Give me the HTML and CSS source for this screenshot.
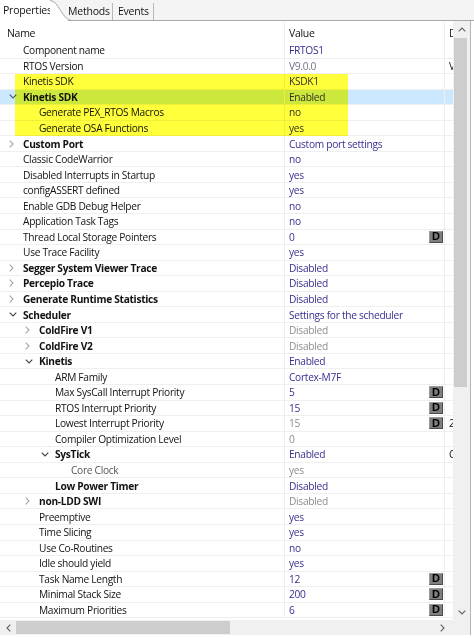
FILE: index.html
```html
<!DOCTYPE html>
<html>
<head>
<meta charset="utf-8">
<link rel="stylesheet" href="styles.css">
</head>
<body>
<div class="tabs">
  <div class="tab active">Properties</div>
  <svg class="tab-curve" width="22" height="21" viewBox="0 0 22 21"><path d="M0 0 C9 0 12 20.5 22 20.5 L22 21 L0 21 Z" fill="#ffffff"/><path d="M0 0.5 C9 0.5 12 20.5 22 20.5" fill="none" stroke="#a8a8a8" stroke-width="1"/></svg>
  <div class="tab methods"><span>Methods</span></div>
  <div class="tab events"><span>Events</span></div>
  <div class="tab-fill"></div>
</div>
<div class="main">
  <div class="table">
    <div class="row head"><div class="name"><span class="hname">Name</span></div><div class="value">Value</div><div class="dcol">D</div></div>

    <div class="row l0"><div class="name"><span class="tw"></span><span>Component name</span></div><div class="value v">FRTOS1</div><div class="dcol"></div></div>
    <div class="row l0"><div class="name"><span class="tw"></span><span>RTOS Version</span></div><div class="value ro">V9.0.0</div><div class="dcol">V</div></div>
    <div class="row l0"><div class="name"><span class="tw"></span><span>Kinetis SDK</span></div><div class="value v">KSDK1</div><div class="dcol"></div></div>
    <div class="row l0 b sel"><div class="name"><span class="tw"><svg class="ex" width="8" height="5" viewBox="0 0 8 5"><path d="M0.7 0.7 L4 4 L7.3 0.7" fill="none" stroke="#4a5a6a" stroke-width="1.1"/></svg></span><span>Kinetis SDK</span></div><div class="value v">Enabled</div><div class="dcol"></div></div>
    <div class="row l1"><div class="name"><span class="tw"></span><span>Generate PEX_RTOS Macros</span></div><div class="value v">no</div><div class="dcol"></div></div>
    <div class="row l1"><div class="name"><span class="tw"></span><span>Generate OSA Functions</span></div><div class="value v">yes</div><div class="dcol"></div></div>
    <div class="row l0 b"><div class="name"><span class="tw"><svg class="co" width="5" height="8" viewBox="0 0 5 8"><path d="M0.7 0.7 L4 4 L0.7 7.3" fill="none" stroke="#a6a6a6" stroke-width="1.1"/></svg></span><span>Custom Port</span></div><div class="value v">Custom port settings</div><div class="dcol"></div></div>
    <div class="row l0"><div class="name"><span class="tw"></span><span>Classic CodeWarrior</span></div><div class="value v">no</div><div class="dcol"></div></div>
    <div class="row l0"><div class="name"><span class="tw"></span><span>Disabled Interrupts in Startup</span></div><div class="value v">yes</div><div class="dcol"></div></div>
    <div class="row l0"><div class="name"><span class="tw"></span><span>configASSERT defined</span></div><div class="value v">yes</div><div class="dcol"></div></div>
    <div class="row l0"><div class="name"><span class="tw"></span><span>Enable GDB Debug Helper</span></div><div class="value v">no</div><div class="dcol"></div></div>
    <div class="row l0"><div class="name"><span class="tw"></span><span>Application Task Tags</span></div><div class="value v">no</div><div class="dcol"></div></div>
    <div class="row l0"><div class="name"><span class="tw"></span><span>Thread Local Storage Pointers</span></div><div class="value v"><span>0</span><span class="dbtn">D</span></div><div class="dcol"></div></div>
    <div class="row l0"><div class="name"><span class="tw"></span><span>Use Trace Facility</span></div><div class="value v">yes</div><div class="dcol"></div></div>
    <div class="row l0 b"><div class="name"><span class="tw"><svg class="co" width="5" height="8" viewBox="0 0 5 8"><path d="M0.7 0.7 L4 4 L0.7 7.3" fill="none" stroke="#a6a6a6" stroke-width="1.1"/></svg></span><span>Segger System Viewer Trace</span></div><div class="value v">Disabled</div><div class="dcol"></div></div>
    <div class="row l0 b"><div class="name"><span class="tw"><svg class="co" width="5" height="8" viewBox="0 0 5 8"><path d="M0.7 0.7 L4 4 L0.7 7.3" fill="none" stroke="#a6a6a6" stroke-width="1.1"/></svg></span><span>Percepio Trace</span></div><div class="value v">Disabled</div><div class="dcol"></div></div>
    <div class="row l0 b"><div class="name"><span class="tw"><svg class="co" width="5" height="8" viewBox="0 0 5 8"><path d="M0.7 0.7 L4 4 L0.7 7.3" fill="none" stroke="#a6a6a6" stroke-width="1.1"/></svg></span><span>Generate Runtime Statistics</span></div><div class="value v">Disabled</div><div class="dcol"></div></div>
    <div class="row l0 b"><div class="name"><span class="tw"><svg class="ex" width="8" height="5" viewBox="0 0 8 5"><path d="M0.7 0.7 L4 4 L7.3 0.7" fill="none" stroke="#404040" stroke-width="1.1"/></svg></span><span>Scheduler</span></div><div class="value v">Settings for the scheduler</div><div class="dcol"></div></div>
    <div class="row l1 b"><div class="name"><span class="tw"><svg class="co" width="5" height="8" viewBox="0 0 5 8"><path d="M0.7 0.7 L4 4 L0.7 7.3" fill="none" stroke="#a6a6a6" stroke-width="1.1"/></svg></span><span>ColdFire V1</span></div><div class="value g">Disabled</div><div class="dcol"></div></div>
    <div class="row l1 b"><div class="name"><span class="tw"><svg class="co" width="5" height="8" viewBox="0 0 5 8"><path d="M0.7 0.7 L4 4 L0.7 7.3" fill="none" stroke="#a6a6a6" stroke-width="1.1"/></svg></span><span>ColdFire V2</span></div><div class="value g">Disabled</div><div class="dcol"></div></div>
    <div class="row l1 b"><div class="name"><span class="tw"><svg class="ex" width="8" height="5" viewBox="0 0 8 5"><path d="M0.7 0.7 L4 4 L7.3 0.7" fill="none" stroke="#404040" stroke-width="1.1"/></svg></span><span>Kinetis</span></div><div class="value v">Enabled</div><div class="dcol"></div></div>
    <div class="row l2"><div class="name"><span class="tw"></span><span>ARM Family</span></div><div class="value v">Cortex-M7F</div><div class="dcol"></div></div>
    <div class="row l2"><div class="name"><span class="tw"></span><span>Max SysCall Interrupt Priority</span></div><div class="value v"><span>5</span><span class="dbtn">D</span></div><div class="dcol"></div></div>
    <div class="row l2"><div class="name"><span class="tw"></span><span>RTOS Interrupt Priority</span></div><div class="value v"><span>15</span><span class="dbtn">D</span></div><div class="dcol"></div></div>
    <div class="row l2"><div class="name"><span class="tw"></span><span>Lowest Interrupt Priority</span></div><div class="value g"><span>15</span><span class="dbtn">D</span></div><div class="dcol">2</div></div>
    <div class="row l2"><div class="name"><span class="tw"></span><span>Compiler Optimization Level</span></div><div class="value g">0</div><div class="dcol"></div></div>
    <div class="row l2 b"><div class="name"><span class="tw"><svg class="ex" width="8" height="5" viewBox="0 0 8 5"><path d="M0.7 0.7 L4 4 L7.3 0.7" fill="none" stroke="#404040" stroke-width="1.1"/></svg></span><span>SysTick</span></div><div class="value v">Enabled</div><div class="dcol">C</div></div>
    <div class="row l3"><div class="name"><span class="tw"></span><span class="gn">Core Clock</span></div><div class="value g">yes</div><div class="dcol"></div></div>
    <div class="row l2 b"><div class="name"><span class="tw"></span><span>Low Power Timer</span></div><div class="value v">Disabled</div><div class="dcol"></div></div>
    <div class="row l1 b"><div class="name"><span class="tw"><svg class="co" width="5" height="8" viewBox="0 0 5 8"><path d="M0.7 0.7 L4 4 L0.7 7.3" fill="none" stroke="#a6a6a6" stroke-width="1.1"/></svg></span><span>non-LDD SWI</span></div><div class="value g">Disabled</div><div class="dcol"></div></div>
    <div class="row l1"><div class="name"><span class="tw"></span><span>Preemptive</span></div><div class="value v">yes</div><div class="dcol"></div></div>
    <div class="row l1"><div class="name"><span class="tw"></span><span>Time Slicing</span></div><div class="value v">yes</div><div class="dcol"></div></div>
    <div class="row l1"><div class="name"><span class="tw"></span><span>Use Co-Routines</span></div><div class="value v">no</div><div class="dcol"></div></div>
    <div class="row l1"><div class="name"><span class="tw"></span><span>Idle should yield</span></div><div class="value v">yes</div><div class="dcol"></div></div>
    <div class="row l1"><div class="name"><span class="tw"></span><span>Task Name Length</span></div><div class="value v"><span>12</span><span class="dbtn">D</span></div><div class="dcol"></div></div>
    <div class="row l1"><div class="name"><span class="tw"></span><span>Minimal Stack Size</span></div><div class="value v"><span>200</span><span class="dbtn">D</span></div><div class="dcol"></div></div>
    <div class="row l1"><div class="name"><span class="tw"></span><span>Maximum Priorities</span></div><div class="value v"><span>6</span><span class="dbtn">D</span></div><div class="dcol"></div></div>
  </div>
  <div class="vscroll">
    <div class="arrow up"><svg width="8" height="5" viewBox="0 0 8 5"><path d="M0.7 4.3 L4 1 L7.3 4.3" fill="none" stroke="#606060" stroke-width="1.1"/></svg></div>
    <div class="vthumb"></div>
    <div class="vspace"></div>
    <div class="arrow down"><svg width="8" height="5" viewBox="0 0 8 5"><path d="M0.7 0.7 L4 4 L7.3 0.7" fill="none" stroke="#606060" stroke-width="1.1"/></svg></div>
  </div>
  <div class="edge"></div>
</div>
<div class="bottom">
  <div class="hscroll">
    <div class="harrow left"><svg width="5" height="8" viewBox="0 0 5 8"><path d="M4.3 0.7 L1 4 L4.3 7.3" fill="none" stroke="#606060" stroke-width="1.1"/></svg></div>
    <div class="hthumb"></div>
    <div class="hspace"></div>
    <div class="harrow right"><svg width="5" height="8" viewBox="0 0 5 8"><path d="M0.7 0.7 L4 4 L0.7 7.3" fill="none" stroke="#606060" stroke-width="1.1"/></svg></div>
  </div>
  <div class="corner"></div>
  <div class="edge"></div>
</div>
<div class="marker"></div>
</body>
</html>
```
FILE: styles.css
```css
html, body {
  margin: 0;
  padding: 0;
}
body {
  position: relative;
  width: 474px;
  height: 638px;
  overflow: hidden;
  background: #ffffff;
  font-family: "Open Sans", "Noto Sans", sans-serif;
  font-size: 10.2px;
  letter-spacing: -0.3px;
  color: #121212;
}

/* tabs */
.tabs {
  display: flex;
  height: 21px;
  background: #f4f4f4;
  font-size: 10.5px;
  letter-spacing: -0.2px;
}
.tab {
  height: 21px;
  line-height: 21px;
  box-sizing: border-box;
  white-space: nowrap;
}
.tab.active {
  background: #ffffff;
  width: 50px;
  padding-left: 3px;
}
.tab-curve {
  flex: none;
  display: block;
}
.tab.methods {
  margin-left: -4px;
  border-bottom: 1px solid #a8a8a8;
  display: flex;
}
.tab.methods span,
.tab.events span {
  display: block;
  height: 17px;
  line-height: 17px;
  margin-top: 3px;
  border-right: 1px solid #b8b8b8;
}
.tab.methods span {
  padding-right: 2px;
}
.tab.events {
  border-bottom: 1px solid #a8a8a8;
  display: flex;
}
.tab.events span {
  padding-left: 5px;
  padding-right: 4px;
}
.tab-fill {
  flex: 1;
  border-bottom: 1px solid #a8a8a8;
}

/* main area */
.main {
  display: flex;
  height: 599px;
}
.table {
  width: 453px;
  flex: none;
  overflow: hidden;
}
.row {
  display: flex;
  align-items: center;
  height: 15.55px;
  box-sizing: border-box;
  border-bottom: 1px solid #efefef;
  white-space: nowrap;
}
.row.head {
  height: 22px;
  border-bottom: none;
  padding-top: 1px;
  font-size: 10.5px;
}
.row.sel {
  background: #cce8ff;
}
.row.b .name {
  font-weight: 700;
}
.name {
  width: 285px;
  height: 100%;
  flex: none;
  box-sizing: border-box;
  border-right: 1px solid #efefef;
  display: flex;
  align-items: center;
}
.hname {
  padding-left: 7px;
}
.l0 .name { padding-left: 5px; }
.l1 .name { padding-left: 21px; }
.l2 .name { padding-left: 37px; }
.l3 .name { padding-left: 53px; }
.tw {
  width: 15px;
  height: 100%;
  flex: none;
  display: flex;
  align-items: center;
  justify-content: center;
  margin-right: 3px;
}
.tw .co {
  margin-right: 2px;
}
.gn {
  color: #555555;
}
.value {
  width: 160px;
  height: 100%;
  flex: none;
  box-sizing: border-box;
  border-right: 1px solid #efefef;
  padding-left: 4px;
  display: flex;
  align-items: center;
  justify-content: space-between;
}
.value.v { color: #363090; }
.value.g { color: #8e8e8e; }
.value.ro { color: #72728a; }
.dcol {
  flex: none;
  width: 40px;
  padding-left: 4px;
}
.dbtn {
  width: 14px;
  height: 12px;
  box-sizing: border-box;
  margin-right: 1px;
  background: #7f7f7f;
  border: 1px solid #4a4a4a;
  border-top-color: #9a9a9a;
  border-left-color: #9a9a9a;
  color: #000000;
  font-family: "Liberation Sans", Arial, sans-serif;
  font-weight: 700;
  font-size: 11px;
  letter-spacing: 0;
  display: flex;
  align-items: center;
  justify-content: center;
  line-height: 1;
}

/* vertical scrollbar */
.vscroll {
  width: 17px;
  flex: none;
  background: #f0f0f0;
  display: flex;
  flex-direction: column;
}
.arrow {
  display: flex;
  align-items: center;
  justify-content: center;
  flex: none;
}
.arrow.up { height: 17px; }
.arrow.down { height: 14px; margin-bottom: 1px; }
.vthumb {
  height: 349px;
  width: 13px;
  margin-left: 1px;
  background: #cdcdcd;
  flex: none;
}
.vspace { flex: 1; }
.edge {
  width: 4px;
  flex: none;
  box-sizing: border-box;
  border-left: 1px solid #b4b4b4;
  background: #ffffff;
}

/* bottom scrollbar */
.bottom {
  display: flex;
  height: 15px;
}
.hscroll {
  width: 453px;
  flex: none;
  background: #f0f0f0;
  display: flex;
  align-items: stretch;
}
.harrow {
  display: flex;
  align-items: center;
  justify-content: center;
  flex: none;
}
.harrow.left { width: 16px; }
.harrow.right { width: 14px; margin-right: 4px; }
.hthumb {
  width: 214px;
  margin: 1px 0;
  background: #cdcdcd;
  flex: none;
}
.hspace { flex: 1; }
.corner {
  width: 17px;
  flex: none;
  background: #f0f0f0;
}

/* yellow highlighter mark over the tree */
.marker {
  position: absolute;
  left: 15px;
  top: 74px;
  width: 333px;
  height: 62px;
  background: #ffff3c;
  mix-blend-mode: multiply;
}
```
